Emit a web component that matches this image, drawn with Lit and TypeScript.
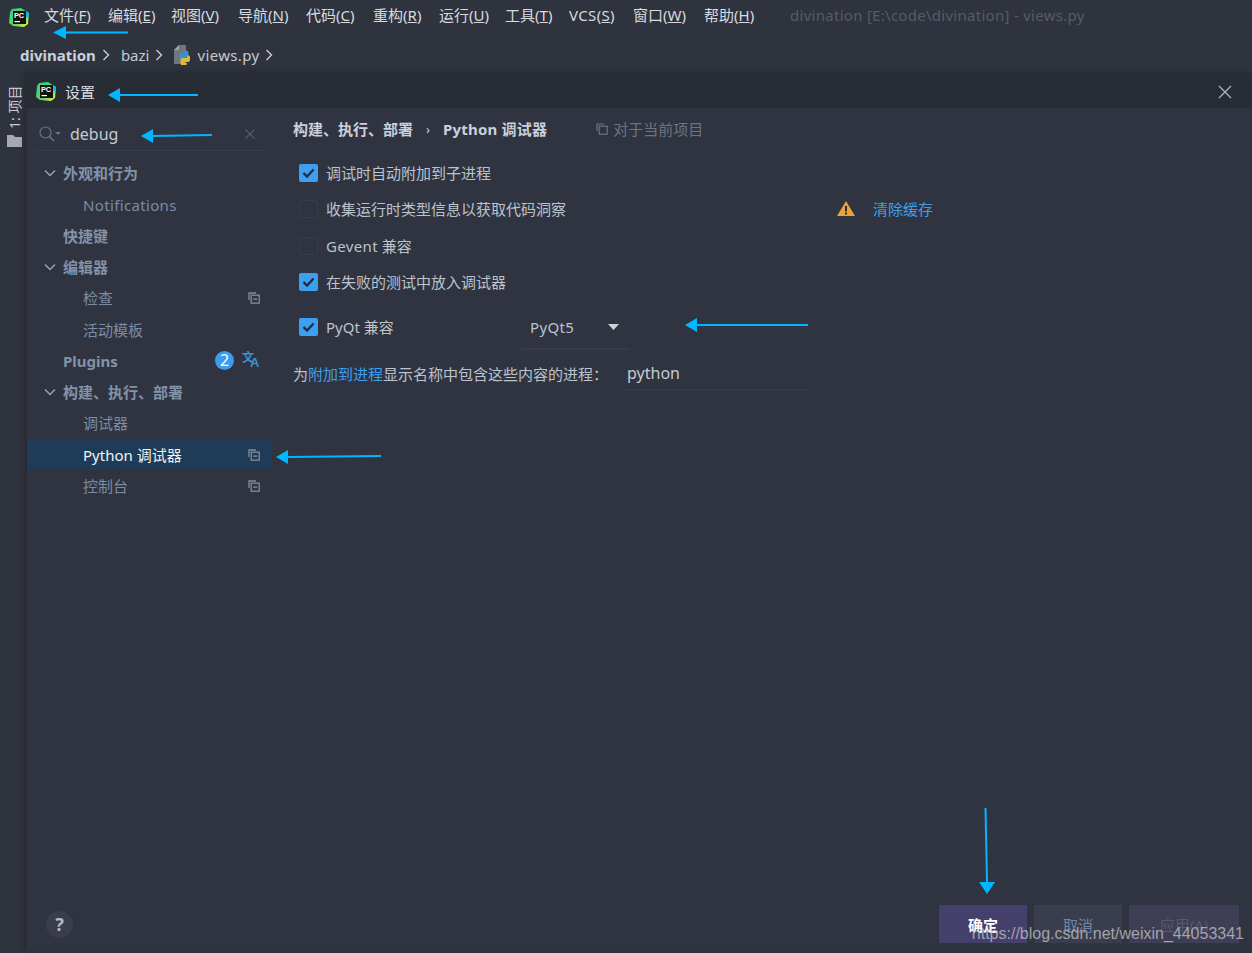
import { LitElement, html, css, svg } from 'lit'
import { customElement } from 'lit/decorators.js'

type TreeRow = {
	label: string
	level: 0 | 1
	open?: boolean
	copy?: boolean
	selected?: boolean
	plugins?: boolean
	wide?: boolean
}

const MENU = [
	['文件', 'F', 64],
	['编辑', 'E', 63],
	['视图', 'V', 67],
	['导航', 'N', 68],
	['代码', 'C', 67],
	['重构', 'R', 66],
	['运行', 'U', 66],
	['工具', 'T', 64],
	['VCS', 'S', 64],
	['窗口', 'W', 71],
	['帮助', 'H', 86],
] as const

const TREE: TreeRow[] = [
	{ label: '外观和行为', level: 0, open: true },
	{ label: 'Notifications', level: 1, wide: true },
	{ label: '快捷键', level: 0 },
	{ label: '编辑器', level: 0, open: true },
	{ label: '检查', level: 1, copy: true },
	{ label: '活动模板', level: 1 },
	{ label: 'Plugins', level: 0, plugins: true },
	{ label: '构建、执行、部署', level: 0, open: true },
	{ label: '调试器', level: 1 },
	{ label: 'Python 调试器', level: 1, copy: true, selected: true },
	{ label: '控制台', level: 1, copy: true },
]

const chevron = html`<svg class="crumb-arrow" width="8" height="12" viewBox="0 0 8 12"><path d="M1.5 1 L6.5 6 L1.5 11" fill="none" stroke="#c9ced6" stroke-width="1.4"/></svg>`

const copyIcon = html`<svg class="copy" width="12" height="12" viewBox="0 0 12 12"><path d="M8 1 H1 V8" fill="none" stroke="#858c97" stroke-width="1.3"/><rect x="3.2" y="3.2" width="8" height="8" fill="none" stroke="#858c97" stroke-width="1.3"/><rect x="5.2" y="6.4" width="4" height="1.4" fill="#858c97"/></svg>`

const tick = html`<svg width="19" height="18" viewBox="0 0 19 18"><path d="M4.5 9 L8 12.6 L14.6 5.4" fill="none" stroke="#232a38" stroke-width="2.2"/></svg>`

const pcLogo = html`<svg class="logo" width="20" height="19" viewBox="0 0 20 19">
	<defs>
		<linearGradient id="pc" x1="0" y1="0" x2="1" y2="1">
			<stop offset="0" stop-color="#21d789"/>
			<stop offset="0.6" stop-color="#5fd65a"/>
			<stop offset="1" stop-color="#fcf84a"/>
		</linearGradient>
	</defs>
	<path d="M3 1 L12 0 L15 2 L20 5 L19 16 L15 19 L4 18 L0 15 L1 4 Z" fill="url(#pc)"/>
	<path d="M15 2 L20 5 L19.5 10 L16 8 Z" fill="#12b8e0"/>
	<rect x="4" y="3" width="13" height="13" fill="#111"/>
	<text x="4.9" y="9.9" font-family="Liberation Sans" font-size="7.4" font-weight="700" fill="#fff">PC</text>
	<rect x="5.5" y="13" width="5.5" height="1.2" fill="#fff"/>
</svg>`

const arrows = svg`
	<path d="M65 32.5 H128" stroke-width="2"/><polygon points="53,32.5 66,26 66,39"/>
	<path d="M118 95 H198" stroke-width="2"/><polygon points="108,95 120,88 120,102"/>
	<path d="M152 136 L212 135" stroke-width="2"/><polygon points="141,136 153,129 153,143"/>
	<path d="M695 325 H808" stroke-width="2"/><polygon points="685,325 697,318 697,332"/>
	<path d="M287 457 L381 456" stroke-width="2"/><polygon points="276,457 288,450 288,464"/>
	<path d="M985.5 808 L987 882" stroke-width="2"/><polygon points="979,882 995,882 987,894"/>
`

@customElement('app-root')
export class AppRoot extends LitElement {
	static styles = css`
		:host {
			display: block;
			position: relative;
			height: 953px;
			overflow: hidden;
			background: #2f333d;
			color: #bcc3cd;
			font: 15px/20px "Noto Sans", "Noto Sans CJK SC", sans-serif;
		}

		* {
			box-sizing: border-box;
		}

		.wide {
			letter-spacing: 0.35px;
		}

		.menubar {
			display: flex;
			align-items: center;
			height: 29px;
			padding-left: 9px;
		}

		.menubar .logo {
			margin: 5px 15px 0 0;
		}

		.menu-item {
			flex: none;
			color: #d7dbe0;
			white-space: nowrap;
		}

		.window-title {
			color: #565b65;
			white-space: nowrap;
			letter-spacing: 0.28px;
		}

		.crumbs {
			display: flex;
			align-items: center;
			height: 44px;
			padding: 8px 0 0 20px;
			color: #c5cad2;
		}

		.crumbs b {
			color: #c9d1dc;
		}

		.crumb-arrow {
			margin: 0 11px 0 6px;
		}

		.crumbs .file {
			margin-right: 6px;
		}

		.workspace {
			display: flex;
			height: 880px;
		}

		.strip {
			flex: none;
			width: 27px;
			display: flex;
			flex-direction: column;
			align-items: center;
			padding-top: 14px;
			gap: 6px;
		}

		.strip span {
			writing-mode: vertical-rl;
			text-orientation: sideways;
			transform: rotate(180deg);
			white-space: nowrap;
			font-size: 14px;
			line-height: 16px;
			height: 42px;
			color: #c5cad2;
			margin-left: 3px;
		}

		.strip svg {
			margin-left: 2px;
		}

		.dialog {
			flex: none;
			width: 1225px;
			height: 878px;
			display: flex;
			flex-direction: column;
			background: #303440;
			box-shadow: -3px -2px 5px rgb(0 0 0 / 18%);
		}

		.titlebar {
			flex: none;
			display: flex;
			align-items: center;
			height: 35px;
			padding: 2px 20px 0 9px;
			background: #282c34;
			color: #d7dbe0;
		}

		.titlebar .logo {
			margin-right: 9px;
		}

		.titlebar .close {
			margin-left: auto;
		}

		.body {
			flex: 1;
			display: flex;
			min-height: 0;
		}

		.sidebar {
			flex: none;
			width: 245px;
			display: flex;
			flex-direction: column;
		}

		.search {
			display: flex;
			align-items: center;
			height: 43px;
			margin: 0 7px 0 8px;
			padding: 10px 10px 0 4px;
			border-bottom: 1px solid #383c49;
		}

		.search .value {
			margin-left: 9px;
			font-size: 16px;
			color: #c5cad2;
		}

		.search .clear {
			margin-left: auto;
		}

		.tree {
			padding-top: 6.8px;
		}

		.row {
			display: flex;
			align-items: center;
			height: 31.25px;
			padding-right: 12px;
			color: #7c8ca3;
		}

		.row.selected {
			background: #1e3b57;
			color: #eef2f6;
		}

		.twist {
			flex: none;
			width: 36px;
			padding-left: 17px;
			display: flex;
		}

		.row.sub .twist {
			width: 56px;
		}

		.row.top {
			color: #8292a9;
			font-weight: 700;
		}

		.row .copy {
			margin-left: auto;
		}

		.badge {
			margin-left: auto;
			width: 19px;
			height: 19px;
			border-radius: 50%;
			background: #3b9cf0;
			color: #fff;
			font-size: 16px;
			font-weight: 400;
			line-height: 19px;
			text-align: center;
		}

		.translate {
			margin: -3px -1px 0 8px;
		}

		.help {
			margin: auto 0 13px 19px;
			width: 27px;
			height: 27px;
			border-radius: 50%;
			background: #3a3e4b;
			color: #b5b9c1;
			font-size: 18px;
			font-weight: 700;
			line-height: 27px;
			text-align: center;
		}

		.main {
			flex: 1;
			display: flex;
			flex-direction: column;
			padding-left: 21px;
		}

		.main-head {
			flex: none;
			display: flex;
			align-items: center;
			height: 42px;
			margin-bottom: 5px;
			color: #c9d1dc;
			font-weight: 700;
		}

		.main-head .sep {
			margin: 0 13px;
			font-weight: 400;
			font-size: 13px;
		}

		.main-head .wide {
			letter-spacing: 0.2px;
		}

		.scope {
			display: flex;
			align-items: center;
			gap: 5px;
			margin-left: 49px;
			font-weight: 400;
			color: #6d7480;
		}

		.option {
			display: flex;
			align-items: center;
			height: 36.4px;
			padding-left: 6px;
			color: #bcc3cd;
		}

		.option.cache-row {
			padding-bottom: 2px;
		}

		.check {
			flex: none;
			width: 19px;
			height: 18px;
			margin-right: 8px;
			border-radius: 2px;
			border: 1px solid #383c49;
		}

		.check.on {
			background: #3d9ff0;
			border: 0;
		}

		.warn {
			margin-left: auto;
			margin-right: 18px;
		}

		.link {
			color: #3d9ff0;
		}

		.clear-cache {
			width: 379px;
		}

		.pyqt {
			margin-top: 8px;
		}

		.pyqt .name {
			width: 195px;
		}

		.select {
			display: flex;
			align-items: center;
			justify-content: space-between;
			width: 109px;
			height: 44px;
			margin-top: 3px;
			padding: 0 11px 0 9px;
			border-bottom: 2px solid #383c49;
		}

		.process {
			display: flex;
			align-items: center;
			height: 36px;
			margin-top: 11px;
		}

		.field {
			width: 186px;
			height: 33px;
			margin-left: 14px;
			padding: 6px 5px 0;
			border-bottom: 1px solid #383c49;
			font-size: 16px;
			color: #c5cad2;
		}

		.buttons {
			display: flex;
			justify-content: flex-end;
			gap: 7px;
			margin: auto 13px 8px 0;
		}

		.btn {
			width: 88px;
			height: 38px;
			padding-top: 10px;
			background: #3a3d4d;
			color: #6f86a6;
			text-align: center;
		}

		.btn.ok {
			background: #443f6b;
			color: #fff;
			font-weight: 700;
		}

		.btn.apply {
			width: 110px;
			background: #3e3f56;
			color: #565a6b;
		}

		.arrows {
			position: absolute;
			inset: 0;
			pointer-events: none;
		}

		.arrows path {
			fill: none;
			stroke: #00b7ff;
		}

		.arrows polygon {
			fill: #00b7ff;
		}

		.watermark {
			position: absolute;
			right: 8px;
			top: 924px;
			font: 16px/20px "Liberation Sans", sans-serif;
			color: rgb(205 205 205 / 72%);
			white-space: nowrap;
		}
	`

	private renderRow(row: TreeRow) {
		const cls = `row ${row.level ? 'sub' : 'top'} ${row.selected ? 'selected' : ''}`
		return html`<div class=${cls}>
			<span class="twist">
				${row.open
					? html`<svg width="12" height="8" viewBox="0 0 12 8"><path d="M1 1.5 L6 6.5 L11 1.5" fill="none" stroke="#9aa3af" stroke-width="1.5"/></svg>`
					: ''}
			</span>
			<span class=${row.wide ? 'wide' : ''}>${row.label}</span>
			${row.copy ? copyIcon : ''}
			${row.plugins
				? html`<span class="badge">2</span>
					<svg class="translate" width="19" height="25" viewBox="0 -3 19 25">
						<text x="0" y="12" font-family="Noto Sans CJK SC" font-size="12" font-weight="700" fill="#3a92cf">文</text>
						<text x="8" y="17" font-family="Liberation Sans" font-size="13" font-weight="700" fill="#3a92cf">A</text>
					</svg>`
				: ''}
		</div>`
	}

	render() {
		return html`
			<div class="menubar">
				${pcLogo}
				${MENU.map(
					([name, key, width]) =>
						html`<span class="menu-item ${name === 'VCS' ? 'wide' : ''}" style="width:${width}px">${name}(<u>${key}</u>)</span>`,
				)}
				<span class="window-title">divination [E:\\code\\divination] - views.py</span>
			</div>

			<div class="crumbs">
				<b>divination</b>${chevron}
				<span>bazi</span>${chevron}
				<svg class="file" width="17" height="20" viewBox="0 0 17 20">
					<path d="M0 5 L5 0 H12 V19 H0 Z" fill="#6f7680"/>
					<path d="M0 5 L5 0 V5 Z" fill="#a0a5ad"/>
					<path d="M5 14 V11 Q5 9 7 9 H10 V8 H8 Q8 5.5 10.5 5.5 H12 Q14.5 5.5 14.5 8 V11 Q14.5 13 12.5 13 H9 Q7.5 13 7.5 14.5 V15.5 H6.5 Q5 15.5 5 14 Z" fill="#3d8fc4"/>
					<path d="M5 14 V11 Q5 9 7 9 H10 V8 H8 Q8 5.5 10.5 5.5 H12 Q14.5 5.5 14.5 8 V11 Q14.5 13 12.5 13 H9 Q7.5 13 7.5 14.5 V15.5 H6.5 Q5 15.5 5 14 Z" transform="rotate(180 10.5 13)" fill="#e0b93a"/>
				</svg>
				<span class="wide">views.py</span>${chevron}
			</div>

			<div class="workspace">
				<div class="strip">
					<span>1: 项目</span>
					<svg width="15" height="12" viewBox="0 0 15 12"><path d="M0 0 H6 L8 2 H15 V12 H0 Z" fill="#a6a9ad"/></svg>
				</div>

				<div class="dialog">
					<div class="titlebar">
						${pcLogo}
						<span>设置</span>
						<svg class="close" width="14" height="14" viewBox="0 0 14 14"><path d="M1 1 L13 13 M13 1 L1 13" stroke="#b4b8be" stroke-width="1.2"/></svg>
					</div>

					<div class="body">
						<div class="sidebar">
							<div class="search">
								<svg width="22" height="16" viewBox="0 0 22 16">
									<circle cx="6.5" cy="6.5" r="5.5" fill="none" stroke="#6f7580" stroke-width="1.2"/>
									<path d="M10.5 10.5 L15 15" stroke="#6f7580" stroke-width="1.4"/>
									<polygon points="16,6 22,6 19,9" fill="#6f7580"/>
								</svg>
								<span class="value">debug</span>
								<svg class="clear" width="10" height="10" viewBox="0 0 10 10"><path d="M0.5 0.5 L9.5 9.5 M9.5 0.5 L0.5 9.5" stroke="#555b66" stroke-width="1.2"/></svg>
							</div>
							<div class="tree">${TREE.map(row => this.renderRow(row))}</div>
							<div class="help">?</div>
						</div>

						<div class="main">
							<div class="main-head">
								<span>构建、执行、部署</span>
								<span class="sep">›</span>
								<span class="wide">Python 调试器</span>
								<span class="scope">
									<svg width="12" height="12" viewBox="0 0 12 12"><path d="M8 1 H1 V8" fill="none" stroke="#6d7480" stroke-width="1.2"/><rect x="3.2" y="3.2" width="8" height="8" fill="none" stroke="#6d7480" stroke-width="1.2"/></svg>
									对于当前项目
								</span>
							</div>

							<div class="option"><span class="check on">${tick}</span>调试时自动附加到子进程</div>
							<div class="option cache-row">
								<span class="check"></span>收集运行时类型信息以获取代码洞察
								<svg class="warn" width="18" height="15" viewBox="0 0 18 15">
									<polygon points="9,0 18,15 0,15" fill="#e8a33a"/>
									<rect x="8" y="5" width="2" height="5.5" fill="#2b2b2b"/>
									<rect x="8" y="11.5" width="2" height="2" fill="#2b2b2b"/>
								</svg>
								<span class="link clear-cache">清除缓存</span>
							</div>
							<div class="option"><span class="check"></span><span><span class="wide">Gevent</span> 兼容</span></div>
							<div class="option"><span class="check on">${tick}</span>在失败的测试中放入调试器</div>

							<div class="option pyqt">
								<span class="check on">${tick}</span>
								<span class="name">PyQt 兼容</span>
								<div class="select">
									<span class="wide">PyQt5</span>
									<svg width="11" height="6" viewBox="0 0 11 6"><polygon points="0,0 11,0 5.5,6" fill="#d0d4da"/></svg>
								</div>
							</div>

							<div class="process">
								<span>为<span class="link">附加到进程</span>显示名称中包含这些内容的进程：</span>
								<div class="field">python</div>
							</div>

							<div class="buttons">
								<div class="btn ok">确定</div>
								<div class="btn">取消</div>
								<div class="btn apply">应用(A)</div>
							</div>
						</div>
					</div>
				</div>
			</div>

			<svg class="arrows" width="1252" height="953" viewBox="0 0 1252 953">${arrows}</svg>
			<div class="watermark">https://blog.csdn.net/weixin_44053341</div>
		`
	}
}
